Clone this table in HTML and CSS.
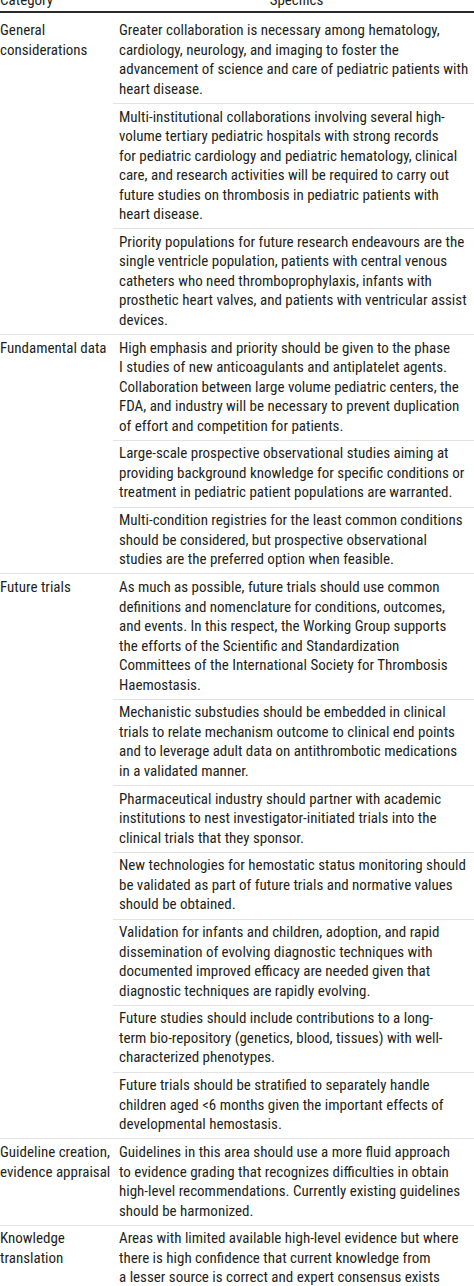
FILE: index.html
```html
<!DOCTYPE html>
<html lang="en">
<head>
<meta charset="utf-8">
<title>Future directions</title>
<link rel="stylesheet" href="styles.css">
</head>
<body>
<div class="table">
  <div class="row head">
    <div class="cat">Category</div>
    <div class="spec">Specifics</div>
  </div>

  <div class="row group first">
    <div class="cat">General<br>considerations</div>
    <div class="items">
      <p>Greater collaboration is necessary among hematology,<br>cardiology, neurology, and imaging to foster the<br>advancement of science and care of pediatric patients with<br>heart disease.</p>
      <p>Multi-institutional collaborations involving several high-<br>volume tertiary pediatric hospitals with strong records<br>for pediatric cardiology and pediatric hematology, clinical<br>care, and research activities will be required to carry out<br>future studies on thrombosis in pediatric patients with<br>heart disease.</p>
      <p>Priority populations for future research endeavours are the<br>single ventricle population, patients with central venous<br>catheters who need thromboprophylaxis, infants with<br>prosthetic heart valves, and patients with ventricular assist<br>devices.</p>
    </div>
  </div>

  <div class="row group">
    <div class="cat">Fundamental data</div>
    <div class="items">
      <p>High emphasis and priority should be given to the phase<br>I studies of new anticoagulants and antiplatelet agents.<br>Collaboration between large volume pediatric centers, the<br>FDA, and industry will be necessary to prevent duplication<br>of effort and competition for patients.</p>
      <p>Large-scale prospective observational studies aiming at<br>providing background knowledge for specific conditions or<br>treatment in pediatric patient populations are warranted.</p>
      <p>Multi-condition registries for the least common conditions<br>should be considered, but prospective observational<br>studies are the preferred option when feasible.</p>
    </div>
  </div>

  <div class="row group">
    <div class="cat">Future trials</div>
    <div class="items">
      <p>As much as possible, future trials should use common<br>definitions and nomenclature for conditions, outcomes,<br>and events. In this respect, the Working Group supports<br>the efforts of the Scientific and Standardization<br>Committees of the International Society for Thrombosis<br>Haemostasis.</p>
      <p>Mechanistic substudies should be embedded in clinical<br>trials to relate mechanism outcome to clinical end points<br>and to leverage adult data on antithrombotic medications<br>in a validated manner.</p>
      <p>Pharmaceutical industry should partner with academic<br>institutions to nest investigator-initiated trials into the<br>clinical trials that they sponsor.</p>
      <p>New technologies for hemostatic status monitoring should<br>be validated as part of future trials and normative values<br>should be obtained.</p>
      <p>Validation for infants and children, adoption, and rapid<br>dissemination of evolving diagnostic techniques with<br>documented improved efficacy are needed given that<br>diagnostic techniques are rapidly evolving.</p>
      <p>Future studies should include contributions to a long-<br>term bio-repository (genetics, blood, tissues) with well-<br>characterized phenotypes.</p>
      <p>Future trials should be stratified to separately handle<br>children aged &lt;6 months given the important effects of<br>developmental hemostasis.</p>
    </div>
  </div>

  <div class="row group">
    <div class="cat">Guideline creation,<br>evidence appraisal</div>
    <div class="items">
      <p>Guidelines in this area should use a more fluid approach<br>to evidence grading that recognizes difficulties in obtain<br>high-level recommendations. Currently existing guidelines<br>should be harmonized.</p>
    </div>
  </div>

  <div class="row group">
    <div class="cat">Knowledge<br>translation</div>
    <div class="items">
      <p>Areas with limited available high-level evidence but where<br>there is high confidence that current knowledge from<br>a lesser source is correct and expert consensus exists<br>should be translated into clinical practice.</p>
    </div>
  </div>
</div>
</body>
</html>
```
FILE: styles.css
```css
html, body {
  margin: 0;
  padding: 0;
  background: #ffffff;
  overflow: hidden;
}

.table {
  width: 474px;
  font-family: "Roboto Condensed", "Roboto", "Liberation Sans", sans-serif;
  font-stretch: 75%;
  font-size: 15px;
  line-height: 19.5px;
  color: #231f20;
  margin-top: -9.4px;
}

.row {
  display: grid;
  grid-template-columns: 113px 1fr;
}

.cat {
  white-space: nowrap;
  padding-left: 0;
}

.head {
  padding-bottom: 1px;
  border-bottom: 2px solid #2a2a2a;
}

.head .spec {
  text-align: center;
  padding-left: 6px;
}

.group {
  border-top: 1px solid #e3e3e3;
}

.group.first {
  border-top: none;
  padding-top: 4.6px;
}

.group .cat {
  padding-top: 3.65px;
}

.items p {
  margin: 0;
  padding: 3.65px 0 3.65px 6px;
  white-space: nowrap;
}

.items p + p {
  border-top: 1px solid #e3e3e3;
}
```
